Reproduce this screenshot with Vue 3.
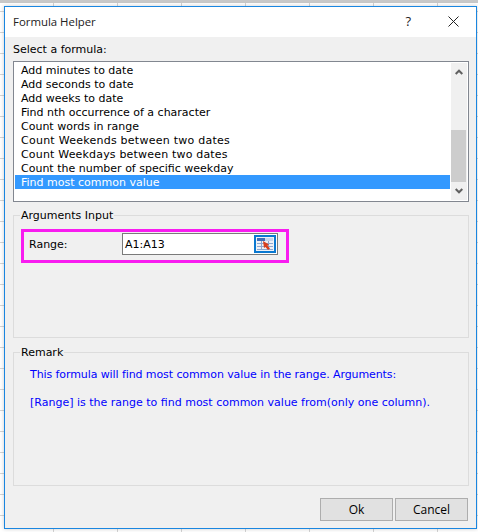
<script setup>
const items = [
  'Add minutes to date',
  'Add seconds to date',
  'Add weeks to date',
  'Find nth occurrence of a character',
  'Count words in range',
  'Count Weekends between two dates',
  'Count Weekdays between two dates',
  'Count the number of specific weekday',
  'Find most common value',
]
</script>

<template>
  <div class="desk">
    <div class="dialog">
      <header class="titlebar">
        <span class="title">Formula Helper</span>
        <span class="help">?</span>
        <svg class="close" width="11" height="11" viewBox="0 0 11 11">
          <path d="M0.5 0.5L10.5 10.5M10.5 0.5L0.5 10.5" stroke="#222" stroke-width="1" fill="none" />
        </svg>
      </header>
      <main class="body">
        <div class="caption">Select a formula:</div>
        <div class="listbox">
          <ul class="list">
            <li v-for="(it, i) in items" :key="it" :class="{ sel: i === items.length - 1 }">{{ it }}</li>
          </ul>
          <div class="scrollbar">
            <svg class="arrow" width="8" height="6" viewBox="0 0 8 6">
              <path d="M0.7 5L4 1.7L7.3 5" stroke="#606060" stroke-width="2" fill="none" />
            </svg>
            <div class="track"><div class="thumb"></div></div>
            <svg class="arrow" width="8" height="6" viewBox="0 0 8 6">
              <path d="M0.7 1L4 4.3L7.3 1" stroke="#606060" stroke-width="2" fill="none" />
            </svg>
          </div>
        </div>
        <section class="group args">
          <div class="legend">Arguments Input</div>
          <div class="highlight">
            <span class="label">Range:</span>
            <div class="input">
              <span class="value">A1:A13</span>
              <span class="refbtn">
                <svg width="18" height="14" viewBox="0 0 18 14">
                  <rect width="18" height="14" fill="#eef1f6" />
                  <rect x="1" y="1" width="8" height="3" fill="#3f6fb8" />
                  <rect x="9" y="1" width="8" height="3" fill="#c9d6ea" />
                  <path d="M1 6.5H17M1 9.5H17M1 12.5H17M5.5 4V13M12.5 4V13" stroke="#8fa8cf" stroke-width="1" fill="none" />
                  <path d="M7 4L13 7.5L11.5 8.5L14 11.5L12 13L9.5 10L8 11Z" fill="#d8401f" />
                </svg>
              </span>
            </div>
          </div>
        </section>
        <section class="group remark">
          <div class="legend">Remark</div>
          <p class="first">This formula will find most common value in the range. Arguments:</p>
          <p>[Range] is the range to find most common value from(only one column).</p>
        </section>
        <div class="buttons">
          <button class="btn">Ok</button>
          <button class="btn">Cancel</button>
        </div>
      </main>
    </div>
  </div>
</template>

<style>
html, body { margin: 0; padding: 0; }
</style>

<style scoped>
.desk {
  width: 478px;
  height: 532px;
  box-sizing: border-box;
  padding: 6px 1px 3px 4px;
  background-color: #fff;
  background-image:
    linear-gradient(#c8c8c8, #c8c8c8),
    repeating-linear-gradient(90deg, transparent 0 53px, #d4d4d4 53px 54px, transparent 54px 64px),
    repeating-linear-gradient(180deg, transparent 0 11px, #d4d4d4 11px 12px, transparent 12px 21px);
  background-size: 100% 3px, 100% 100%, 100% 100%;
  background-repeat: no-repeat;
  font-family: "DejaVu Sans", sans-serif;
  overflow: hidden;
}
.dialog {
  width: 473px;
  height: 523px;
  box-sizing: border-box;
  border: 1px solid #1a86e0;
  box-shadow: 0 0 4px rgba(0, 0, 0, 0.2);
  display: flex;
  flex-direction: column;
  background: #f0f0f0;
}
.titlebar {
  height: 30px;
  box-sizing: border-box;
  flex: none;
  background: #fff;
  display: flex;
  align-items: center;
  padding: 0 17px 2px 8px;
  font-family: "Open Sans", sans-serif;
  font-size: 11.4px;
  color: #222;
}
.title { flex: 1; }
.help { margin-right: 37px; font-size: 13px; }
.body {
  flex: 1;
  display: flex;
  flex-direction: column;
  padding: 0 7px 0 8px;
  font-size: 11px;
  color: #000;
}
.caption { height: 24px; line-height: 26px; }
.listbox {
  height: 141px;
  box-sizing: border-box;
  border: 1px solid #828790;
  background: #fff;
  display: flex;
  padding: 1px;
  gap: 1px;
}
.list { flex: 1; margin: 0; padding: 0; list-style: none; }
.list li { height: 14px; line-height: 16px; padding-left: 6px; white-space: nowrap; }
.list li:nth-child(6) { letter-spacing: 0.25px; }
.list li:nth-child(7) { letter-spacing: 0.18px; }
.list li.sel { background: #3399ff; color: #fff; }
.scrollbar {
  width: 16px;
  background: #f0f0f0;
  display: flex;
  flex-direction: column;
  align-items: center;
}
.arrow { flex: none; margin: 6px 0; }
.track { flex: 1; width: 100%; display: flex; flex-direction: column; justify-content: flex-end; }
.thumb { height: 52px; width: 15px; background: #cdcdcd; }
.group {
  position: relative;
  box-sizing: border-box;
  border: 1px solid #dcdcdc;
}
.legend {
  position: absolute;
  left: 6px;
  top: -7px;
  background: #f0f0f0;
  padding: 0 1px;
  line-height: 14px;
}
.args { margin-top: 13px; height: 123px; padding: 13px 0 0 7px; }
.highlight {
  width: 268px;
  height: 34px;
  box-sizing: border-box;
  border: 3px solid #f81cf0;
  display: flex;
  padding: 1px 0 0 5px;
}
.label { width: 93px; line-height: 24px; }
.input {
  width: 156px;
  height: 22px;
  box-sizing: border-box;
  border: 1px solid #7a7a7a;
  background: #fff;
  display: flex;
  align-items: center;
  justify-content: space-between;
}
.value { padding-left: 2px; }
.refbtn {
  width: 22px;
  height: 18px;
  box-sizing: border-box;
  border: 2px solid #0a78d0;
  margin-right: 1px;
  display: flex;
  align-items: center;
  justify-content: center;
  background: #eef1f6;
}
.remark { margin-top: 14px; height: 134px; padding: 15px 0 0 16px; color: #0000ff; }
.remark .legend { color: #000; }
.remark p { margin: 0 0 14px; line-height: 14px; white-space: nowrap; }
.remark p.first { letter-spacing: -0.09px; }
.buttons {
  display: flex;
  justify-content: flex-end;
  gap: 2px;
  margin-top: 12px;
  padding-right: 1px;
}
.btn {
  width: 73px;
  height: 23px;
  box-sizing: border-box;
  border: 1px solid #adadad;
  background: #e1e1e1;
  font-family: "Open Sans", sans-serif;
  font-size: 12px;
  color: #000;
  padding: 0;
}
</style>
